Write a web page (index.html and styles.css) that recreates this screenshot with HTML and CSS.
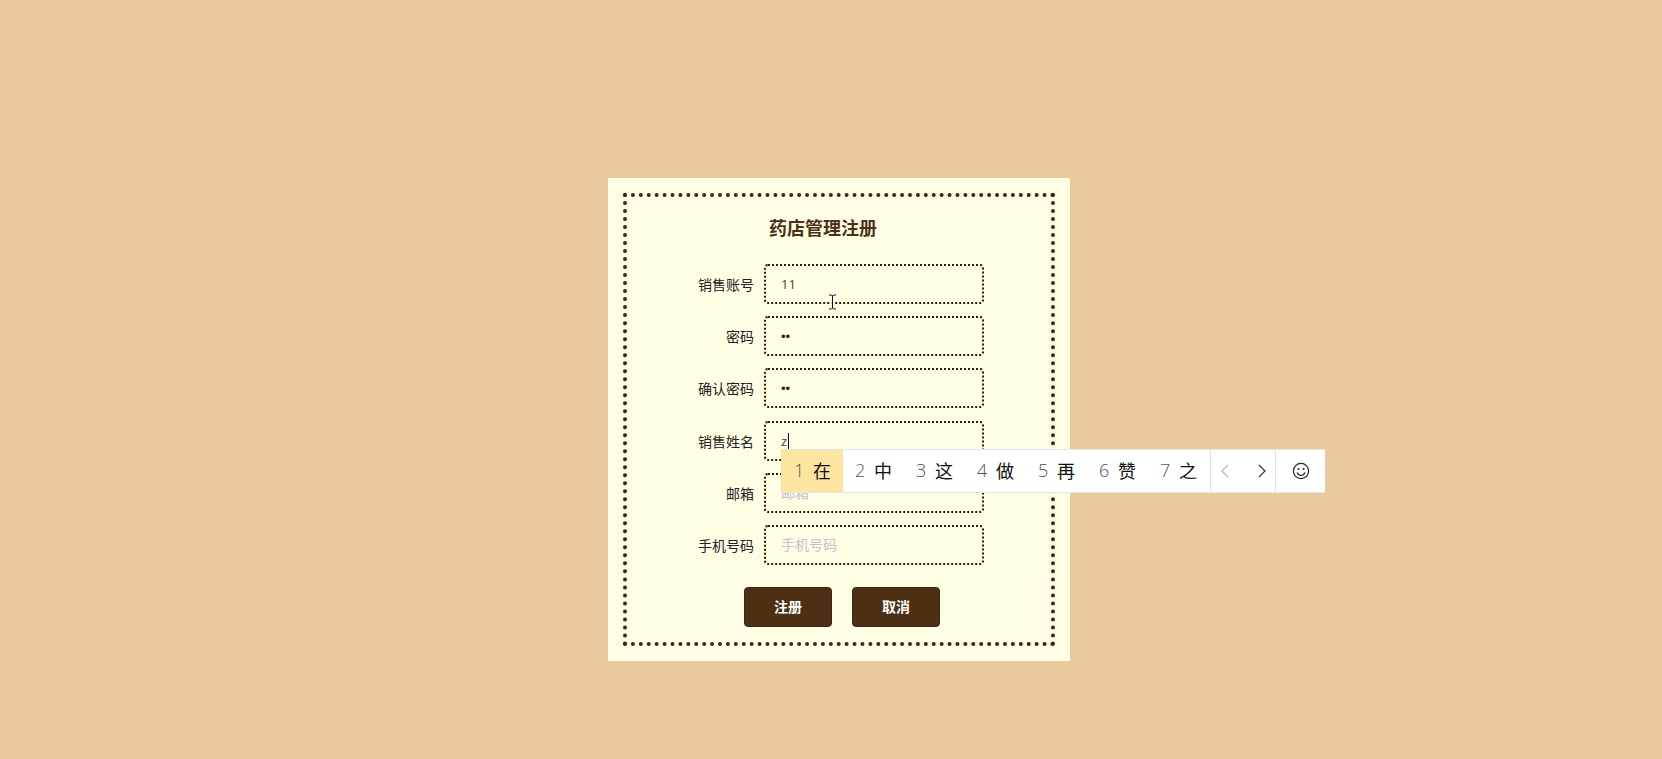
FILE: index.html
```html
<!DOCTYPE html>
<html lang="zh-CN">
<head>
    <meta charset="UTF-8">
    <title>药店管理注册</title>
    <link rel="stylesheet" href="styles.css">
</head>
<body>
    <div class="card">
        <div class="card-inner">
            <form class="form">
                <h2 class="title">药店管理注册</h2>
                <div class="row">
                    <label class="label">销售账号</label>
                    <div class="field">
                        <input class="input" type="text" value="11" placeholder="销售账号">
                        <svg class="mouse-cursor" width="9" height="16" viewBox="0 0 9 16">
                            <path d="M1 1h2.5l1 1 1-1H8M4.5 2v12M1 15h2.5l1-1 1 1H8" fill="none" stroke="#fff" stroke-width="2.6"/>
                            <path d="M1 1h2.5l1 1 1-1H8M4.5 2v12M1 15h2.5l1-1 1 1H8" fill="none" stroke="#111" stroke-width="1"/>
                        </svg>
                    </div>
                </div>
                <div class="row">
                    <label class="label">密码</label>
                    <div class="field"><input class="input secret" type="text" value="••" placeholder="密码"></div>
                </div>
                <div class="row">
                    <label class="label">确认密码</label>
                    <div class="field"><input class="input secret" type="text" value="••" placeholder="确认密码"></div>
                </div>
                <div class="row">
                    <label class="label">销售姓名</label>
                    <div class="field">
                        <input class="input" type="text" value="z" placeholder="销售姓名">
                        <span class="caret"></span>
                    </div>
                </div>
                <div class="row">
                    <label class="label">邮箱</label>
                    <div class="field"><input class="input" type="text" placeholder="邮箱"></div>
                </div>
                <div class="row">
                    <label class="label">手机号码</label>
                    <div class="field"><input class="input" type="text" placeholder="手机号码"></div>
                </div>
                <div class="buttons">
                    <button type="button" class="btn">注册</button>
                    <button type="button" class="btn">取消</button>
                </div>
            </form>
        </div>
    </div>

    <div class="ime">
        <div class="cand active"><span class="num">1</span><span class="word">在</span></div>
        <div class="cand"><span class="num">2</span><span class="word">中</span></div>
        <div class="cand"><span class="num">3</span><span class="word">这</span></div>
        <div class="cand"><span class="num">4</span><span class="word">做</span></div>
        <div class="cand"><span class="num">5</span><span class="word">再</span></div>
        <div class="cand"><span class="num">6</span><span class="word">赞</span></div>
        <div class="cand"><span class="num">7</span><span class="word">之</span></div>
        <div class="pager">
            <svg width="10" height="16" viewBox="0 0 10 16"><path d="M8 2 2 8l6 6" fill="none" stroke="#b4b4b4" stroke-width="1.2"/></svg>
            <svg width="10" height="16" viewBox="0 0 10 16"><path d="m2 2 6 6-6 6" fill="none" stroke="#333" stroke-width="1.2"/></svg>
        </div>
        <div class="emoji">
            <svg width="18" height="18" viewBox="0 0 18 18">
                <circle cx="9" cy="9" r="7.6" fill="none" stroke="#222" stroke-width="1.2"/>
                <circle cx="6.4" cy="7" r="1" fill="#222"/>
                <circle cx="11.6" cy="7" r="1" fill="#222"/>
                <path d="M5 10.5c1 2 2.4 3 4 3s3-1 4-3" fill="none" stroke="#222" stroke-width="1.2"/>
            </svg>
        </div>
    </div>
</body>
</html>
```

FILE: styles.css
```css
* {
    box-sizing: border-box;
}
html, body {
    height: 100%;
}
body {
    margin: 0;
    padding: 178px 0 0 608px;
    background-color: #e8ca9c;
    font-family: "Open Sans", "Noto Sans CJK SC", sans-serif;
    overflow: hidden;
}
.card {
    width: 462px;
    height: 483px;
    padding: 15px;
    background-color: #fffde4;
}
.card-inner {
    height: 100%;
    border: 4px dotted #3f2610;
    padding-left: 35px;
}
.form {
    width: 322px;
}
.title {
    margin: 0;
    padding-top: 19px;
    height: 67px;
    font-size: 18px;
    line-height: 24px;
    font-weight: 700;
    text-align: center;
    color: #4d2f13;
}
.row {
    display: flex;
    height: 40px;
    margin-bottom: 12.2px;
}
.label {
    width: 102px;
    padding-right: 10px;
    font-size: 14px;
    line-height: 41px;
    text-align: right;
    color: #222;
}
.field {
    position: relative;
    width: 220px;
}
.input {
    display: block;
    width: 100%;
    height: 40px;
    padding: 0 15px;
    border: 2px dotted #2f1c0a;
    border-radius: 4px;
    background: transparent;
    font-family: inherit;
    font-size: 13px;
    color: #444;
    outline: none;
}
.input::placeholder {
    color: #c0c4cc;
    font-size: 14px;
}
.secret {
    font-family: "Liberation Sans", sans-serif;
    font-size: 13px;
    color: #222;
}
.caret {
    position: absolute;
    left: 24px;
    top: 12px;
    width: 1px;
    height: 16px;
    background-color: #111;
}
.mouse-cursor {
    position: absolute;
    left: 64px;
    top: 30px;
}
.buttons {
    display: flex;
    gap: 20px;
    padding-left: 82px;
    margin-top: 22.5px;
}
.btn {
    width: 88px;
    height: 40px;
    padding: 0 0 2px;
    border: 1px solid #3d2410;
    border-radius: 4px;
    background-color: #4d2f13;
    color: #fff;
    font-family: inherit;
    font-size: 14px;
    font-weight: 700;
}
.ime {
    position: absolute;
    left: 781px;
    top: 449px;
    display: flex;
    width: 544px;
    height: 44px;
    background-color: #fff;
    border-top: 1px solid #e6e6e6;
    border-bottom: 1px solid #e6e6e6;
}
.cand {
    display: flex;
    align-items: center;
    width: 61px;
    padding: 0 0 2px 12px;
    font-size: 18px;
}
.cand.active {
    width: 62px;
    padding-left: 13px;
    background-color: #fde4a0;
}
.num {
    width: 19px;
    color: #555;
    font-weight: 300;
}
.word {
    color: #111;
}
.pager {
    display: flex;
    align-items: center;
    justify-content: space-between;
    width: 66px;
    margin-left: 1px;
    padding: 0 8px 0 9px;
    border-left: 1px solid #e2e2e2;
    border-right: 1px solid #e2e2e2;
}
.emoji {
    display: flex;
    align-items: center;
    justify-content: center;
    flex: 1;
}
```
